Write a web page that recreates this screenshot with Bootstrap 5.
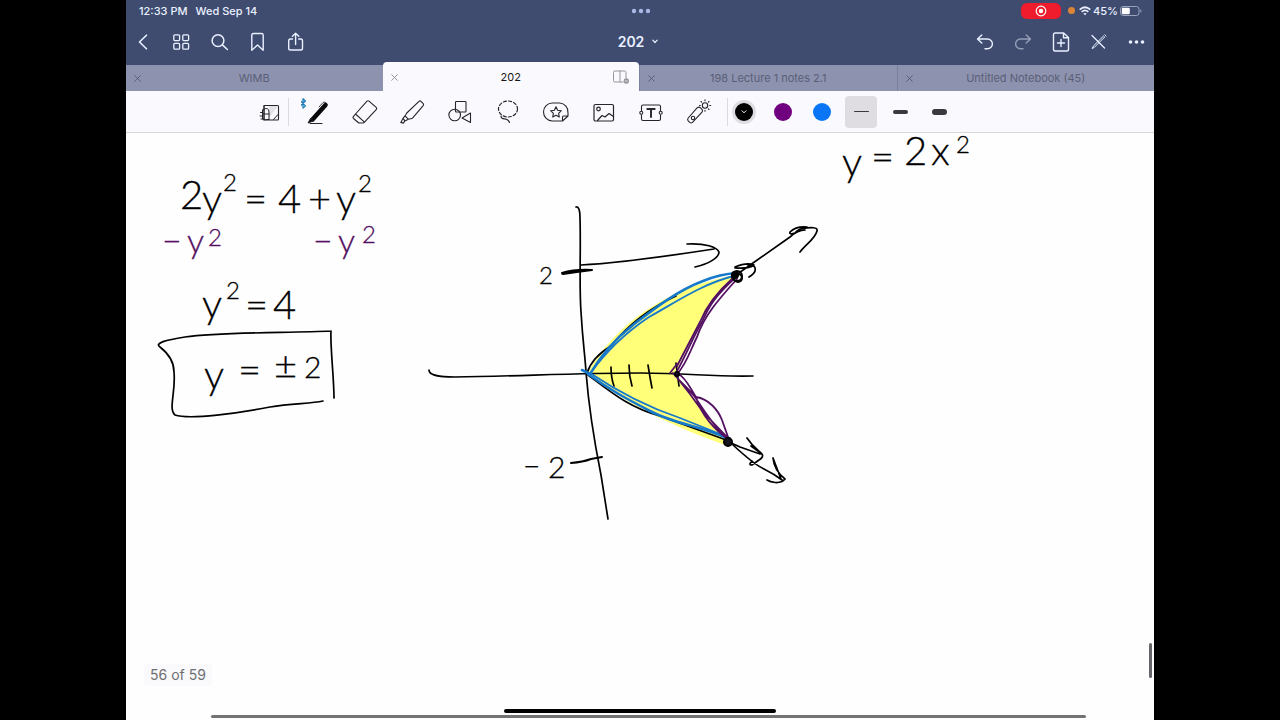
<!DOCTYPE html>
<html lang="en">
<head>
<meta charset="utf-8">
<meta name="viewport" content="width=device-width, initial-scale=1">
<title>202</title>
<link href="https://cdn.jsdelivr.net/npm/bootstrap@5.3.0/dist/css/bootstrap.min.css" rel="stylesheet">
<style>
  body { background: #000; padding: 0 126px; font-family: Inter, "Liberation Sans", sans-serif; }
  svg { display: block; fill: none; stroke: currentColor; stroke-linecap: round; stroke-linejoin: round; }
  button { background: none; border: 0; padding: 0; color: inherit; }
  .app { min-height: 100vh; background: #fefefe; }
  .topbar { background: #3f4c70; color: #eaf0ff; }
  .thirds { display: grid; grid-template-columns: 1fr auto 1fr; align-items: center; }
  .status { height: 21px; padding: 0 12px 0 13px; font-size: 11px; line-height: 20px; font-weight: 500; }
  .indicators { gap: 2px; }
  .rec { width: 40px; height: 16px; margin-right: 5px; border-radius: 6px; background: #ee1c2c; color: #fff; }
  .cam { width: 7px; height: 7px; margin-right: 2px; border-radius: 50%; background: #dd8536; }
  .actions { height: 41px; }
  .actions .act { width: 34px; height: 34px; }
  .doc-title { font-size: 14px; line-height: 20px; font-weight: 600; }
  .tabs { height: 29px; background: linear-gradient(#3f4c70 3px, #8d92ae 3px); }
  .tab { flex: 1 1 0; height: 26px; font-size: 11px; line-height: 26px; color: #5a5f78; border-left: 1px solid #7b809d; padding: 0 8px; }
  .tab:first-child, .tab.current { border-left: 0; }
  .tab.current { height: 29px; line-height: 30px; background: #faf9fd; color: #17171b; border-radius: 4px 4px 0 0; }
  .tab.current button { color: #96959c; }
  .tab a { color: inherit; text-decoration: none; }
  .tools { height: 42px; padding-left: 126px; background: #faf9fd; border-bottom: 1px solid #d8d8dc; color: #26262a; }
  .sidebtn { width: 36px; }
  .rule { width: 1px; height: 28px; background: #dcdade; }
  .kit { width: 430px; margin: 0 4px; }
  .kit button { flex: 1 1 0; }
  .pens { gap: 7px; }
  .pens button { width: 32px; height: 32px; border-radius: 4px; }
  .pens .picked { background: #dfdde2; }
  .dot { width: 18px; height: 18px; border-radius: 50%; }
  .dot.ink { background: #000; color: #fff; box-shadow: 0 0 0 3px #dfdde2; }
  .dot.plum { background: #71007f; }
  .dot.azure { background: #0a76f5; }
  .bar { width: 15px; border-radius: 3px; background: #3b393f; }
  .bar.fine { height: 1px; }
  .bar.mid { height: 4px; }
  .bar.thick { height: 6px; }
  .pagecount { left: 18px; bottom: 34px; padding: 0 6px; font-size: 14px; line-height: 22px; color: #6f6f73; background: #faf9fb; border-radius: 4px; }
  .scrollv { right: 2px; bottom: 42px; width: 3px; height: 35px; border-radius: 2px; background: #66666a; }
  .scrollh { left: 85px; right: 68px; bottom: 2px; height: 3px; border-radius: 2px; background: #737375; }
  .home { bottom: 7px; width: 272px; height: 4px; border-radius: 2px; background: #000; }
  .note { overflow: visible; }
  .note text { fill: #000; stroke: #000; stroke-width: .3; font-family: Lato, "Liberation Sans", sans-serif; font-weight: 300; font-size: 40px; }
  .note .plumink text { fill: #54105f; stroke: #54105f; font-size: 34px; }
  .note text.sup, .note .plumink text.sup { font-size: 24px; }
  .note text.num { font-size: 30px; }
  .note text.tick { font-size: 24px; }
</style>
</head>
<body>
<div class="app d-flex flex-column">
  <header class="topbar">
    <div class="status thirds">
      <div class="d-flex gap-2"><span>12:33 PM</span><span>Wed Sep 14</span></div>
      <svg width="20" height="6" viewBox="0 0 20 6" aria-hidden="true"><g fill="#a9b8e4" stroke="none"><circle cx="3" cy="3" r="2.2"/><circle cx="10" cy="3" r="2.2"/><circle cx="17" cy="3" r="2.2"/></g></svg>
      <div class="indicators d-flex align-items-center justify-content-end">
        <span class="rec d-flex align-items-center justify-content-center"><svg width="12" height="12" viewBox="0 0 12 12"><circle cx="6" cy="6" r="4.8" stroke-width="1.2"/><circle cx="6" cy="6" r="2.2" fill="#fff" stroke="none"/></svg></span>
        <span class="cam"></span>
        <svg width="12" height="10" viewBox="0 0 12 10"><g stroke-width="1.7" stroke-linecap="butt"><path d="M.7 3.7Q6-1.2 11.3 3.7M2.7 5.9Q6 3 9.3 5.9"/><path d="M6 9.3 4.3 7.5Q6 6.3 7.7 7.5Z" fill="currentColor" stroke="none"/></g></svg>
        <span>45%</span>
        <svg width="22" height="10" viewBox="0 0 22 10"><rect x=".5" y=".5" width="18.5" height="9" rx="2.6" stroke="#99a3bd"/><rect x="1.8" y="1.8" width="8" height="6.4" rx="1.3" fill="#fff" stroke="none"/><path d="M20.8 4v2" stroke="#99a3bd"/></svg>
      </div>
    </div>
    <nav class="actions thirds" aria-label="Notebook">
      <div class="d-flex gap-1">
        <button class="act d-flex align-items-center justify-content-center" aria-label="Back"><svg width="20" height="20" viewBox="0 0 20 20" stroke-width="1.6"><path d="M13.5 3.2 6.5 10l7 6.8"/></svg></button>
        <button class="act d-flex align-items-center justify-content-center" aria-label="Pages"><svg width="20" height="20" viewBox="0 0 20 20" stroke-width="1.3"><rect x="2.8" y="2.8" width="5.8" height="5.8" rx="1"/><rect x="11.8" y="2.8" width="5.8" height="5.8" rx="1"/><rect x="2.8" y="11.4" width="5.8" height="5.8" rx="1"/><rect x="11.8" y="11.4" width="5.8" height="5.8" rx="1"/></svg></button>
        <button class="act d-flex align-items-center justify-content-center" aria-label="Search"><svg width="20" height="20" viewBox="0 0 20 20" stroke-width="1.5"><circle cx="9" cy="8.6" r="5.9"/><path d="m13.4 12.9 5 4.6"/></svg></button>
        <button class="act d-flex align-items-center justify-content-center" aria-label="Bookmark"><svg width="20" height="20" viewBox="0 0 20 20" stroke-width="1.4"><path d="M4.8 3.2q0-1.7 1.7-1.7h8q1.7 0 1.7 1.7v15L10.5 13l-5.7 5.2Z"/></svg></button>
        <button class="act d-flex align-items-center justify-content-center" aria-label="Share"><svg width="20" height="20" viewBox="0 0 20 20" stroke-width="1.4"><path d="M7.5 7h-2Q3.7 7 3.7 8.8v7.4q0 1.8 1.8 1.8h10.2q1.8 0 1.8-1.8V8.8Q17.5 7 15.7 7h-2M10.6 12.5V1.4M7.4 4.3l3.2-3 3.2 3"/></svg></button>
      </div>
      <button class="doc-title d-flex align-items-center gap-2 me-1">202 <svg width="6" height="5" viewBox="0 0 6 5" stroke-width="1.2"><path d="m.8 1.2 2.2 2.3 2.2-2.3"/></svg></button>
      <div class="d-flex gap-1 justify-content-end">
        <button class="act d-flex align-items-center justify-content-center" aria-label="Undo"><svg width="20" height="20" viewBox="0 0 20 20" stroke-width="1.4"><path d="M6.8 3 2.5 7l4.3 4M2.8 7h9.7a4.9 4.9 0 0 1 0 9.8H10"/></svg></button>
        <button class="act d-flex align-items-center justify-content-center opacity-50" aria-label="Redo"><svg width="20" height="20" viewBox="0 0 20 20" stroke-width="1.4"><path d="M13.2 3 17.5 7l-4.3 4M17.2 7H7.5a4.9 4.9 0 0 0 0 9.8H10"/></svg></button>
        <button class="act d-flex align-items-center justify-content-center" aria-label="Add page"><svg width="20" height="20" viewBox="0 0 20 20" stroke-width="1.4"><path d="M12.7 1H4.3Q2.5 1 2.5 2.8v14.4Q2.5 19 4.300 19h11.400q1.800 0 1.800-1.800V5.500ZM12.500 1.200v4.500h4.800M10 7.500v7M6.500 11h7"/></svg></button>
        <button class="act d-flex align-items-center justify-content-center" aria-label="Read only mode"><svg width="20" height="20" viewBox="0 0 20 20"><path d="M3 3.500 15.500 16" stroke-width="1.300"/><path d="M3.300 16.200 4.600 13.800 14.500 4l1.200 1-10 10ZM15.800 2.800l1.300 1.300" stroke-width="1"/></svg></button>
        <button class="act d-flex align-items-center justify-content-center" aria-label="More"><svg width="20" height="20" viewBox="0 0 20 20"><g fill="currentColor" stroke="none"><circle cx="3.5" cy="10" r="1.800"/><circle cx="9.5" cy="10" r="1.800"/><circle cx="15.5" cy="10" r="1.800"/></g></svg></button>
      </div>
    </nav>
  </header>

  <div class="tabs d-flex align-items-end">
    <div class="tab thirds"><button aria-label="Close WIMB"><svg width="7" height="7" viewBox="0 0 7 7"><path d="m.7.7 5.600 5.600M6.300.7.7 6.300"/></svg></button><a href="#wimb">WIMB</a></div>
    <div class="tab current thirds"><button aria-label="Close 202"><svg width="7" height="7" viewBox="0 0 7 7"><path d="m.7.7 5.600 5.600M6.300.7.7 6.300"/></svg></button><a href="#n202">202</a>
      <button class="ms-auto" aria-label="Split view"><svg width="18" height="14" viewBox="0 0 18 14"><path d="M10 12H2Q.5 12 .5 10.500v-8Q.5 1 2 1h9.500Q13 1 13 2.500V8M7 1v11"/><circle cx="13.300" cy="11" r="2.700" fill="currentColor" stroke="none"/><path d="M12.200 11h2.200" stroke="#fff" stroke-width=".7"/></svg></button></div>
    <div class="tab thirds"><button aria-label="Close 198 Lecture 1 notes 2.1"><svg width="7" height="7" viewBox="0 0 7 7"><path d="m.7.7 5.600 5.600M6.300.7.7 6.300"/></svg></button><a href="#n198">198 Lecture 1 notes 2.1</a></div>
    <div class="tab thirds"><button aria-label="Close Untitled Notebook (45)"><svg width="7" height="7" viewBox="0 0 7 7"><path d="m.7.7 5.600 5.600M6.300.7.7 6.300"/></svg></button><a href="#untitled">Untitled Notebook (45)</a></div>
  </div>

  <div class="tools d-flex align-items-center" role="toolbar" aria-label="Drawing tools">
    <button class="sidebtn d-flex justify-content-center" aria-label="Zoom window"><svg width="22" height="20" viewBox="0 0 22 20"><path d="M5 3.500h13.500q1 0 1 1V17q0 1-1 1H5Z" stroke-width="1.100"/><path d="M10 4h9L10 16Z" fill="#e4e2e8" stroke="none"/><path d="M19 12.500 14.500 17.500M5 4v14M3.500 8Q9.800 4 10 10v7.500M3.500 12H10M3.500 8v9Q6 18 10 17.500M1.500 10.500h2M1 14h2.500M2 17h2"/></svg></button>
    <span class="rule"></span>
    <div class="kit d-flex">
      <button class="d-flex justify-content-center" aria-label="Pen"><svg width="32" height="28" viewBox="0 0 32 28"><path d="M-.4 3 4.400 7.800 2 10.200V.6L4.400 3 -.4 7.800" stroke="#1779b8" stroke-width="1.200"/><path d="m11.500 21.500 13-14.500" stroke="#09090b" stroke-width="4.600"/><path d="M9.500 20.500 7 25l4.500-1.700Z" fill="#09090b"/><path d="m18 9 4-4.500q1.500-1 3 .2" stroke="#444"/><path d="M9 25.500h12"/></svg></button>
      <button class="d-flex justify-content-center" aria-label="Eraser"><svg width="28" height="28" viewBox="0 0 28 28" stroke-width="1.100"><path d="M16 3.200q1-.9 2 0l7.200 6.200q1 .9.200 2L13.500 24.200 4.500 16ZM4.500 16l-2.200 2.600q-.8 1 .2 1.900l4.700 4q.6.500 1.400.500h3.400l1.500-.8"/></svg></button>
      <button class="d-flex justify-content-center" aria-label="Highlighter"><svg width="28" height="28" viewBox="0 0 28 28" stroke-width="1.100"><path d="M8.800 15 21 3.300q1-.9 2 .1l2.200 2.200q.8 1 0 2L14.500 20.200q-.8.700-1.900.6l-2.300.4-3.300-3.400 1.100-1.600ZM7 17.800l-2 2.600 1.900 2.500 3.400-1.700M5 20.400l-2.200 4 2.500.7 1.600-2.200"/></svg></button>
      <button class="d-flex justify-content-center" aria-label="Shapes"><svg width="26" height="28" viewBox="0 0 26 28" stroke-width="1.100"><rect x="8.500" y="3.500" width="10.500" height="10.500" rx=".7"/><circle cx="7.700" cy="17" r="5.800"/><path d="m15 20 8.500-5v9.500Z"/></svg></button>
      <button class="d-flex justify-content-center" aria-label="Lasso"><svg width="26" height="28" viewBox="0 0 26 28" stroke-width="1.200"><ellipse cx="13" cy="11" rx="9.500" ry="8" stroke-dasharray="3 2.200"/><path d="M6 18q0 2.800 3.500 2.800 4 .5 5 3.700"/></svg></button>
      <button class="d-flex justify-content-center" aria-label="Elements"><svg width="28" height="28" viewBox="0 0 28 28" stroke-width="1.100"><path d="M20.500 23H10.500a9 9 0 0 1 0-18h7a9 9 0 0 1 8.500 10v3Zm0 0v-4q0-1 1-1H26"/><path d="m14 8.800 1.600 3.400 3.800.5-2.800 2.600.7 3.700-3.300-1.800-3.300 1.800.7-3.700-2.800-2.600 3.800-.5Z"/></svg></button>
      <button class="d-flex justify-content-center" aria-label="Image"><svg width="24" height="28" viewBox="0 0 24 28" stroke-width="1.200"><rect x="2" y="6.500" width="19.500" height="16.500" rx="1.500"/><circle cx="6.500" cy="11" r="1.800"/><path d="M5.500 22.500 10 17.500l3 1.500 4-3.500 4.500 3"/></svg></button>
      <button class="d-flex justify-content-center" aria-label="Text"><svg width="26" height="28" viewBox="0 0 26 28" stroke-width="1.100"><path d="M3.500 12.500v-4Q3.500 7 5 7h16q1.500 0 1.500 1.500v4M3.500 17v4q0 1.500 1.500 1.500h16q1.500 0 1.500-1.500v-4"/><circle cx="3.300" cy="14.700" r="1.500"/><circle cx="22.700" cy="14.700" r="1.500"/><path d="M9.300 11h7.400M13 11v8" stroke-width="1.900"/></svg></button>
      <button class="d-flex justify-content-center" aria-label="Laser pointer"><svg width="28" height="28" viewBox="0 0 28 28" stroke-width="1.100"><path d="M12.300 9.700q1.500-1.200 3 0l1.700 1.600q1.200 1.400 0 2.900L7.500 24.400q-1.300 1.200-2.800 0l-1.500-1.500q-1.200-1.500 0-2.900Z"/><circle cx="8" cy="20" r="1.700"/><circle cx="20" cy="7.500" r="2.700"/><path d="M20 1.800v1M24 3.500l-.6.6M25.700 7.500h-1M24 11.500l-.6-.6M20 13.200v-1M16 3.500l.6.6M14.500 7.500h.8"/></svg></button>
    </div>
    <span class="rule"></span>
    <div class="pens d-flex">
      <button class="d-flex align-items-center justify-content-center" aria-label="Black"><span class="dot ink d-flex align-items-center justify-content-center"><svg width="6" height="4" viewBox="0 0 6 4"><path d="M1 .8 3 2.800 5 .8"/></svg></span></button>
      <button class="d-flex align-items-center justify-content-center" aria-label="Purple"><span class="dot plum"></span></button>
      <button class="d-flex align-items-center justify-content-center" aria-label="Blue"><span class="dot azure"></span></button>
      <button class="picked d-flex align-items-center justify-content-center" aria-label="Thin stroke"><span class="bar fine"></span></button>
      <button class="d-flex align-items-center justify-content-center" aria-label="Medium stroke"><span class="bar mid"></span></button>
      <button class="d-flex align-items-center justify-content-center" aria-label="Thick stroke"><span class="bar thick"></span></button>
    </div>
  </div>

  <main class="position-relative flex-grow-1">
    <svg class="note w-100" viewBox="126 133 1028 587" role="img" aria-label="Handwritten notes with a shaded region between two parabolas">
      <!-- worked solution -->
      <g>
        <text x="180" y="209">2</text><text x="202" y="213">y</text><text class="sup" x="223" y="191">2</text>
        <text x="244" y="213">=</text><text x="278" y="213">4</text><text x="308" y="213">+</text>
        <text x="336" y="213">y</text><text class="sup" x="358" y="192">2</text>
      </g>
      <g class="plumink">
        <text x="162" y="253">−</text><text x="187" y="253">y</text><text class="sup" x="208" y="246">2</text>
        <text x="313" y="253">−</text><text x="338" y="253">y</text><text class="sup" x="362" y="243">2</text>
      </g>
      <g>
        <text x="202" y="318">y</text><text class="sup" x="226" y="299">2</text><text x="245" y="319">=</text><text x="273" y="319">4</text>
        <text x="204" y="389">y</text><text x="238" y="384">=</text><text x="274" y="379">±</text><text class="num" x="304" y="378">2</text>
      </g>
      <path d="M331 331C290 333 220 332 185 337C166 340 154 343 160 347C169 354 174 363 174 372C176 392 168 409 175 415C190 420 240 413 270 407C292 403 310 404 323 401M331 331C330 345 334 378 334 398" stroke="#000" stroke-width="1.700"/>
      <g><text x="842" y="176">y</text><text x="871" y="171">=</text><text x="904" y="165">2</text><text x="931" y="165">x</text><text class="sup" x="956" y="153">2</text></g>
      <!-- axis labels -->
      <g><text class="tick" x="539" y="284">2</text><text class="num" x="523" y="477">−</text><text class="num" x="548" y="478">2</text></g>

      <!-- shaded region -->
      <path fill="#ffff7a" stroke="none" d="M588 373C604 342 650 290 736 275C708 300 696 332 675 373C692 396 710 420 728 446C690 432 635 412 588 373Z"/>

      <!-- axes and ticks -->
      <g stroke="#000" stroke-width="1.700">
        <path d="M576 207Q580 206 580 218C581 250 579 285 581 312C583 345 585 355 586 372C589 410 596 450 601 475L608 519"/>
        <path d="M429 370C429 375 437 377 455 377C520 376 580 373 640 373C690 373 710 377 753 376"/>
        <path d="M562 273Q575 269 592 270Q576 272 563 274Q562 274 562 273M571 463Q583 462 591 459L602 457" stroke-width="2"/>
        <path d="M611 367Q611 378 614 386M629 365Q629 376 632 386M648 365Q650 378 652 388M676 363L679 386"/>
        <path d="M581 265C620 263 675 255 714 249M687 244C705 243 717 247 719 252C719 258 708 264 695 267"/>
        <path d="M736 275L753 263L790 237Q798 230 805 230M790 232Q796 226 807 227Q798 229 795 233Q789 235 790 232M800 229C812 227 818 227 817 231C815 239 806 244 800 252M735 267Q747 262 754 265Q749 269 735 268M748 265C757 264 758 272 749 277"/>
        <path d="M729 442L740 447L760 454M747 438C753 447 757 449 762 454L751 446M762 454Q764 457 759 460L752 465Q748 465 752 461M733 445C746 457 755 465 764 469Q774 474 782 480M773 458C774 469 780 475 785 479C780 485 770 482 767 480M773 458L781 479"/>
        <path d="M587 373C591 361 599 353 611 346C628 325 652 307 676 296M588 375C612 393 630 408 660 416L729 441"/>
      </g>

      <!-- traced curves -->
      <g stroke="#1679cb" stroke-width="2.600">
        <path d="M582 370L590 374C600 357 615 339 633 325C650 312 676 291 703 281Q720 274 737 273"/>
        <path d="M589 375C607 350 628 331 649 317C676 302 704 283 734 276" stroke-width="1.800"/>
        <path d="M588 374C610 390 627 399 650 411C672 423 700 426 727 438"/>
        <path d="M590 373C620 393 650 408 680 418L730 438" stroke-width="1.800"/>
      </g>
      <g stroke="#541061" stroke-width="1.800">
        <path d="M736 277C715 296 709 306 702 322C694 335 687 353 676 373"/>
        <path d="M733 278C715 294 706 307 700 322L677 366M737 279C718 300 704 316 697 337C690 351 686 365 677 374M670 373L677 364"/>
        <path d="M673 373C680 382 690 390 695 397C704 411 715 428 727 438M678 374C686 377 691 390 696 397C709 399 718 410 722 420L728 437M696 397C701 415 715 430 728 439M675 375C684 386 696 402 703 412L730 440"/>
      </g>
      <g stroke="#000" stroke-width="2">
        <circle cx="737" cy="276" r="5"/><circle cx="738" cy="278" r="4"/><circle cx="735" cy="275" r="3" fill="#000"/>
        <circle cx="728" cy="442" r="4" fill="#15151f"/><circle cx="677" cy="374" r="2" fill="#300a38"/>
      </g>
    </svg>
    <span class="pagecount position-absolute">56 of 59</span>
    <span class="scrollv position-absolute"></span>
    <span class="scrollh position-absolute"></span>
    <span class="home position-absolute start-50 translate-middle-x"></span>
  </main>
</div>
<script src="https://cdn.jsdelivr.net/npm/bootstrap@5.3.0/dist/js/bootstrap.bundle.min.js"></script>
</body>
</html>
